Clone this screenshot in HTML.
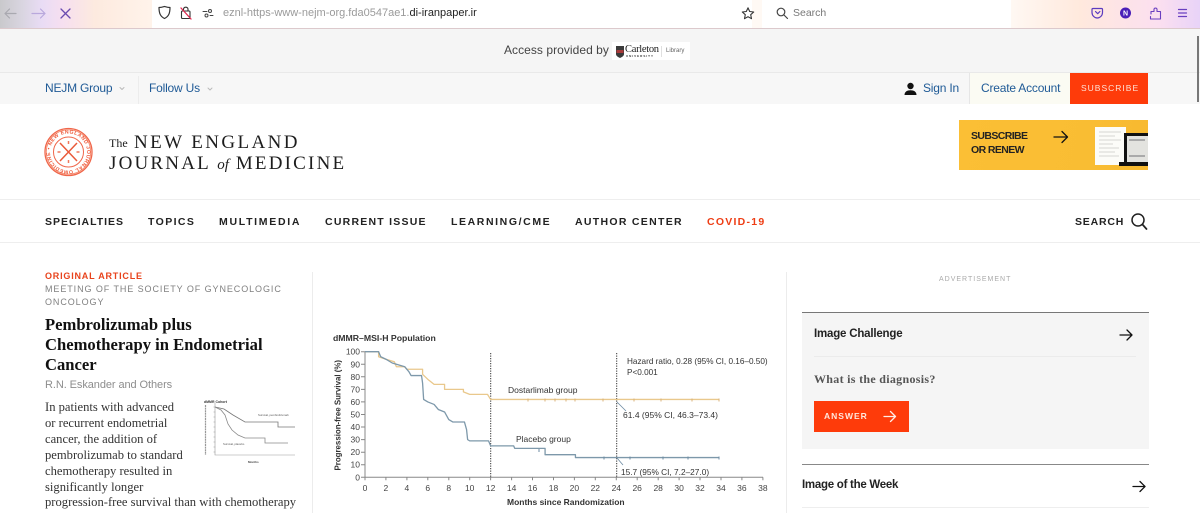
<!DOCTYPE html>
<html lang="en"><head><meta charset="utf-8"><title>NEJM</title>
<style>
html,body{margin:0;padding:0;background:#fff;width:1200px;height:513px;overflow:hidden}
body{position:relative;font-family:"Liberation Sans",sans-serif}
.a{position:absolute;white-space:nowrap}
.b{position:absolute}
.s{font-family:"Liberation Serif",serif}
.nav{top:215px;font-size:10.5px;font-weight:700;color:#222;line-height:14px}
.blue{color:#1f5a96;font-size:12px;letter-spacing:-.2px;line-height:16px}
svg{position:absolute;left:0;top:0}
</style></head><body>
<div class="b" style="left:0;top:0;width:1200px;height:28px;background:linear-gradient(90deg,#c9c9cc 0,#d9d5e0 22px,#e9dcf5 42px,#f6dff0 62px,#fdeadf 95px,#fff3ea 150px,#fffaf6 400px,#fff8f3 1011px,#ffe9dd 1080px,#fbdff0 1160px,#e8d3f8 1200px)"></div>
<div class="b" style="left:152px;top:0;width:600px;height:28px;background:#fff"></div>
<div class="b" style="left:762px;top:0;width:249px;height:28px;background:#fff"></div>
<div class="b" style="left:0;top:28px;width:1200px;height:1px;background:#dcc9cc"></div>
<div class="a" style="left:223px;top:6px;font-size:11px;line-height:15px;color:#9a9a9a">eznl-https-www-nejm-org.fda0547ae1.<span style="color:#222">di-iranpaper.ir</span></div>
<div class="a" style="left:793px;top:6px;font-size:10.5px;line-height:15px;color:#777">Search</div>

<div class="b" style="left:0;top:29px;width:1200px;height:43px;background:#f5f5f5"></div>
<div class="b" style="left:0;top:72px;width:1200px;height:1px;background:#e9e9e9"></div>
<div class="b" style="left:0;top:73px;width:1200px;height:31px;background:#f7f7f7"></div>
<div class="a" style="left:504px;top:43px;font-size:12px;line-height:15px;letter-spacing:.05px;color:#444">Access provided by</div>
<div class="b" style="left:612px;top:42px;width:78px;height:18px;background:#fff"></div>
<div class="a s" style="left:625px;top:44px;font-size:10.5px;line-height:11px;letter-spacing:-.3px;color:#222">Carleton</div>
<div class="a" style="left:626px;top:54px;font-size:3px;line-height:4px;letter-spacing:1px;font-weight:700;color:#333">UNIVERSITY</div>
<div class="a" style="left:666px;top:47px;font-size:6px;line-height:8px;color:#666">Library</div>

<div class="a blue" style="left:45px;top:80px">NEJM Group</div>
<div class="a blue" style="left:149px;top:80px">Follow Us</div>
<div class="b" style="left:138px;top:76px;width:1px;height:28px;background:#ececec"></div>
<div class="a blue" style="left:923px;top:80px">Sign In</div>
<div class="b" style="left:969px;top:73px;width:101px;height:31px;background:#fbfbf3;border-left:1px solid #e6e6e6"></div>
<div class="a blue" style="left:981px;top:80px">Create Account</div>
<div class="b" style="left:1070px;top:73px;width:78px;height:31px;background:#fe3b0a"></div>
<div class="a" style="left:1081px;top:83px;font-size:8.5px;line-height:11px;letter-spacing:1px;color:#ffe0d4">SUBSCRIBE</div>

<div class="a s" style="left:109px;top:135px;font-size:12px;line-height:16px;color:#222">The</div>
<div class="a s" style="left:134px;top:132px;font-size:19px;line-height:21px;letter-spacing:2.4px;color:#1d1d1d">NEW ENGLAND</div>
<div class="a s" style="left:109px;top:153px;font-size:19px;line-height:21px;letter-spacing:2.2px;color:#1d1d1d">JOURNAL <i style="font-size:15px;letter-spacing:0">of</i> MEDICINE</div>

<div class="b" style="left:0;top:199px;width:1200px;height:1px;background:#eeeeee"></div>
<div class="b" style="left:0;top:242px;width:1200px;height:1px;background:#eeeeee"></div>
<div class="a nav" style="left:45px;letter-spacing:1px">SPECIALTIES</div>
<div class="a nav" style="left:148px;letter-spacing:1.4px">TOPICS</div>
<div class="a nav" style="left:219px;letter-spacing:1.7px">MULTIMEDIA</div>
<div class="a nav" style="left:325px;letter-spacing:1.23px">CURRENT ISSUE</div>
<div class="a nav" style="left:451px;letter-spacing:1.6px">LEARNING/CME</div>
<div class="a nav" style="left:575px;letter-spacing:1.3px">AUTHOR CENTER</div>
<div class="a nav" style="left:707px;letter-spacing:1.25px;color:#ee3d14">COVID-19</div>
<div class="a nav" style="left:1075px;letter-spacing:.8px">SEARCH</div>

<div class="b" style="left:959px;top:120px;width:189px;height:50px;background:linear-gradient(100deg,#fbbf35,#f9bd33 70%,#f8b92f)"></div>
<div class="a" style="left:971px;top:129px;font-size:10.5px;font-weight:700;line-height:14px;letter-spacing:-.6px;color:#222">SUBSCRIBE<br>OR RENEW</div>
<div class="b" style="left:1095px;top:127px;width:31px;height:38px;background:#fcfcf8"></div>
<div class="b" style="left:1124px;top:133px;width:21px;height:28px;background:#e3e3df;border:solid #111;border-width:3px 0 0 3px"></div>
<div class="b" style="left:1119px;top:162px;width:29px;height:4px;background:#111"></div>

<div class="b" style="left:312px;top:272px;width:1px;height:241px;background:#ececec"></div>
<div class="b" style="left:786px;top:272px;width:1px;height:241px;background:#ececec"></div>

<div class="a" style="left:45px;top:271px;font-size:9px;font-weight:700;line-height:11px;letter-spacing:.8px;color:#e8431c">ORIGINAL ARTICLE</div>
<div class="a" style="left:45px;top:283px;font-size:9px;line-height:13px;letter-spacing:.92px;color:#808080">MEETING OF THE SOCIETY OF GYNECOLOGIC<br>ONCOLOGY</div>
<div class="a s" style="left:45px;top:315px;font-size:16.6px;font-weight:700;line-height:20px;color:#111">Pembrolizumab plus<br>Chemotherapy in Endometrial<br>Cancer</div>
<div class="a" style="left:45px;top:378px;font-size:11px;line-height:15px;letter-spacing:-.08px;color:#8d8d8d">R.N. Eskander and Others</div>
<div class="a s" style="left:45px;top:400px;font-size:12.6px;line-height:15.9px;color:#333">In patients with advanced<br>or recurrent endometrial<br>cancer, the addition of<br>pembrolizumab to standard<br>chemotherapy resulted in<br>significantly longer<br>progression-free survival than with chemotherapy<br>alone.</div>

<div class="a" style="left:333px;top:333px;font-size:8.7px;font-weight:700;line-height:11px;color:#333">dMMR–MSI-H Population</div>
<div class="a" style="left:508px;top:385px;font-size:8.5px;line-height:11px;color:#333">Dostarlimab group</div>
<div class="a" style="left:516px;top:434px;font-size:8.5px;line-height:11px;color:#333">Placebo group</div>
<div class="a" style="left:627px;top:357px;font-size:8.2px;line-height:10.5px;color:#333">Hazard ratio, 0.28 (95% CI, 0.16–0.50)<br>P&lt;0.001</div>
<div class="a" style="left:623px;top:410px;font-size:8.5px;line-height:11px;color:#333">61.4 (95% CI, 46.3–73.4)</div>
<div class="a" style="left:621px;top:467px;font-size:8.3px;line-height:11px;color:#333">15.7 (95% CI, 7.2–27.0)</div>
<div class="a" style="left:507px;top:497px;font-size:8.5px;font-weight:700;line-height:11px;color:#333">Months since Randomization</div>
<div class="a" style="left:283px;top:410px;width:110px;text-align:center;font-size:7.9px;font-weight:700;line-height:11px;color:#333;transform:rotate(-90deg)">Progression-free Survival (%)</div>

<div class="a" style="left:939px;top:275px;font-size:7px;line-height:10px;letter-spacing:1px;color:#aaa">ADVERTISEMENT</div>
<div class="b" style="left:802px;top:312px;width:347px;height:1px;background:#777"></div>
<div class="b" style="left:802px;top:313px;width:347px;height:136px;background:#f5f5f5"></div>
<div class="b" style="left:814px;top:356px;width:322px;height:1px;background:#ebebeb"></div>
<div class="a" style="left:814px;top:327px;font-size:11.5px;font-weight:700;line-height:15px;letter-spacing:-.2px;color:#222">Image Challenge</div>
<div class="a s" style="left:814px;top:372px;font-size:12px;font-weight:700;line-height:15px;letter-spacing:.3px;color:#555">What is the diagnosis?</div>
<div class="b" style="left:814px;top:401px;width:95px;height:31px;background:#fe3b0a"></div>
<div class="a" style="left:824px;top:411px;font-size:8.5px;font-weight:700;line-height:11px;letter-spacing:1px;color:#ffe6dc">ANSWER</div>
<div class="b" style="left:802px;top:464px;width:347px;height:1px;background:#888"></div>
<div class="a" style="left:802px;top:478px;font-size:11.5px;font-weight:700;line-height:15px;letter-spacing:-.27px;color:#222">Image of the Week</div>
<div class="b" style="left:802px;top:507px;width:347px;height:1px;background:#eeeeee"></div>
<div class="b" style="left:1197px;top:36px;width:2px;height:66px;background:#777"></div>

<svg width="1200" height="513" viewBox="0 0 1200 513" fill="none">
<!-- browser icons -->
<g stroke-linecap="round" stroke-linejoin="round">
<path d="M16 13.500H5M9.500 9 5 13.500 9.500 18" stroke="#a9a9b0" stroke-width="1.200"/>
<path d="M32 13.500H45M40.500 9l4.500 4.500-4.500 4.500" stroke="#b9a8dc" stroke-width="1.200"/>
<path d="M61 9l9 9M70 9l-9 9" stroke="#6a4bb0" stroke-width="1.300"/>
<path transform="translate(16,0)" d="M143 7.500c3 0 5-1 5.500-1s2.500 1 5.500 1c0 6-1.500 9-5.500 11-4-2-5.500-5-5.500-11z" stroke="#333" stroke-width="1.200"/>
<g transform="translate(23,0)">
<rect x="158.500" y="11" width="8.500" height="7.500" rx="1" stroke="#333" stroke-width="1.100"/>
<path d="M160.500 11V9a2.300 2.300 0 0 1 4.500 0v2" stroke="#333" stroke-width="1.100"/>
<path d="M158 8l10 11" stroke="#e22850" stroke-width="1.300"/>
</g>
<g transform="translate(26,0)">
<path d="M177 11.500h4M184 15.500h3" stroke="#444" stroke-width="1"/>
<circle cx="184" cy="11" r="1.500" stroke="#444"/><circle cx="180.500" cy="15.500" r="1.500" stroke="#444"/>
</g>
<path transform="translate(19,0)" d="M729 7.800l1.700 3.700 4 .5-3 2.700.8 4-3.500-2-3.500 2 .8-4-3-2.700 4-.5z" stroke="#333" stroke-width="1.100"/>
<circle cx="781" cy="12" r="3.800" stroke="#444" stroke-width="1.200"/>
<path d="M784 15l3.500 3.500" stroke="#444" stroke-width="1.200"/>
<path transform="translate(60,0)" d="M1033 8.500h8.500a1 1 0 0 1 1 1v3c0 3-2.500 5.500-5.250 5.500S1032 15.500 1032 12.500v-3a1 1 0 0 1 1-1z" stroke="#5b3bc0" stroke-width="1.200"/>
<path d="M1095.500 11.500l2.200 2.200 2.200-2.200" stroke="#5b3bc0" stroke-width="1.200"/>
<circle cx="1125.500" cy="13" r="5.500" fill="#4a1fb8"/>
<path transform="translate(5,0)" d="M1146 14V11.500h3V9a1.700 1.700 0 0 1 3 0v2.500h3.500V19h-10v-2.500" stroke="#6a3fc0" stroke-width="1.100"/>
<path d="M1178.500 9.500h8M1178.500 13h8M1178.500 16.500h8" stroke="#6a3fc0" stroke-width="1.200"/>
<!-- nav chevrons -->
<path d="M120 87.500l2 2 2-2" stroke="#bbb" stroke-width="1"/>
<path d="M208 88l2 2 2-2" stroke="#bbb" stroke-width="1"/>
<!-- search -->
<circle cx="1138" cy="220" r="6" stroke="#222" stroke-width="1.500"/>
<path d="M1142.500 224.500l4 4.500" stroke="#222" stroke-width="1.700"/>
<!-- arrows -->
<path d="M1054 137h13M1062 131.500l5.500 5.500-5.500 5.500" stroke="#111" stroke-width="1.300"/>
<path d="M1120 335h12M1127 330l5 5-5 5" stroke="#111" stroke-width="1.300"/>
<path d="M884 416.500h11.500M890.500 411.500l5 5-5 5" stroke="#ffeee8" stroke-width="1.300"/>
<path d="M1133 486.500h12M1140 481.500l5 5-5 5" stroke="#111" stroke-width="1.300"/>
</g>
<path d="M904.500 95c0-3.300 2.600-4.800 6-4.800s6 1.500 6 4.800z" fill="#111"/>
<circle cx="910.500" cy="86" r="3.200" fill="#111"/>
<text x="1125.500" y="15.500" font-family="Liberation Sans" font-size="7" font-weight="700" fill="#fff" text-anchor="middle">N</text>
<!-- carleton crest -->
<path d="M616 46h8v8c0 2-2 3-4 4-2-1-4-2-4-4z" fill="#3a3a3a"/><path d="M616.500 50h7v3h-7z" fill="#a83a3a"/>
<path d="M661.500 46v11" stroke="#ccc" stroke-width=".6"/>
<!-- seal -->
<defs><path id="ring" d="M68.500 170.500a18.500 18.500 0 1 1 .01 0"/></defs>
<circle cx="68.500" cy="152" r="23.500" fill="#fff" stroke="#f0664a" stroke-width="1.300"/>
<circle cx="68.500" cy="152" r="22.200" fill="none" stroke="#f48b6e" stroke-width=".8"/>
<circle cx="68.500" cy="152" r="15" fill="none" stroke="#f0664a" stroke-width="1"/>
<text font-family="Liberation Sans" font-size="5.200" font-weight="700" fill="#ef5d3e" letter-spacing=".45"><textPath href="#ring">MEDICINE • NEW ENGLAND JOURNAL OF MEDICINE</textPath></text>
<path d="M60 143l17 18M77 143l-17 18" stroke="#ea5a3a" stroke-width="1.500"/>
<path d="M68.500 141v3M68.500 160v3M57.500 152h3M76.500 152h3" stroke="#f0785c" stroke-width="1.500"/>
<!-- document -->
<g stroke="#d6d6d2" stroke-width="1">
<path d="M1099 132h22M1099 136h16M1099 140h22M1099 144h14M1099 148h20M1099 152h16M1099 156h20"/>
</g>
<path d="M1129 140h16M1129 156h16" stroke="#aaa" stroke-width="2"/>
<!-- thumbnail -->
<g stroke="#9a9a9a" stroke-width=".6">
<path d="M215 403V455H295M213.500 407h2M213.500 412h2M213.500 417h2M213.500 422h2M213.500 427h2M213.500 432h2M213.500 437h2M213.500 442h2M213.500 447h2M213.500 452h2"/>
</g>
<g stroke="#777" stroke-width=".8">
<path d="M215 407L224 409 233 415 245 422H278V427H295"/>
<path d="M215 407L221 410 225 415 228 424 232 430 238 435 245 438H265V443H288" stroke="#8a8a8a"/>
</g>
<path d="M205.500 405V455" stroke="#555" stroke-width="1.200" stroke-dasharray="2 .6" opacity=".6"/>
<text x="204" y="403" font-family="Liberation Sans" font-size="3.500" font-weight="700" fill="#333">dMMR Cohort</text>
<text x="258" y="416" font-family="Liberation Sans" font-size="2.800" fill="#555">Survival, pembrolizumab</text>
<text x="223" y="445" font-family="Liberation Sans" font-size="2.800" fill="#555">Survival, placebo</text>
<text x="248" y="463" font-family="Liberation Sans" font-size="3" font-weight="700" fill="#444">Months</text>
<!-- chart -->
<path d="M365 351.700V477.300H763" stroke="#888" stroke-width="1"/>
<path id="ticks" stroke="#888" stroke-width="1" d="M361 351.700h4M361 364.300h4M361 376.800h4M361 389.400h4M361 401.900h4M361 414.500h4M361 427h4M361 439.600h4M361 452.200h4M361 464.700h4M361 477.300h4M365 477.300v3M385.900 477.300v3M406.900 477.300v3M427.800 477.300v3M448.800 477.300v3M469.700 477.300v3M490.600 477.300v3M511.600 477.300v3M532.500 477.300v3M553.500 477.300v3M574.400 477.300v3M595.300 477.300v3M616.300 477.300v3M637.200 477.300v3M658.200 477.300v3M679.100 477.300v3M700 477.300v3M721 477.300v3M741.900 477.300v3M762.900 477.300v3"/>
<g font-family="Liberation Sans" font-size="8.500" fill="#444">
<g text-anchor="end"><text x="360" y="354.700">100</text><text x="360" y="367.300">90</text><text x="360" y="379.800">80</text><text x="360" y="392.400">70</text><text x="360" y="404.900">60</text><text x="360" y="417.500">50</text><text x="360" y="430">40</text><text x="360" y="442.600">30</text><text x="360" y="455.200">20</text><text x="360" y="467.700">10</text><text x="360" y="480.300">0</text></g>
<g text-anchor="middle"><text x="365" y="491">0</text><text x="385.900" y="491">2</text><text x="406.900" y="491">4</text><text x="427.800" y="491">6</text><text x="448.800" y="491">8</text><text x="469.700" y="491">10</text><text x="490.600" y="491">12</text><text x="511.600" y="491">14</text><text x="532.500" y="491">16</text><text x="553.500" y="491">18</text><text x="574.400" y="491">20</text><text x="595.300" y="491">22</text><text x="616.300" y="491">24</text><text x="637.200" y="491">26</text><text x="658.200" y="491">28</text><text x="679.100" y="491">30</text><text x="700" y="491">32</text><text x="721" y="491">34</text><text x="741.900" y="491">36</text><text x="762.900" y="491">38</text></g>
</g>
<path d="M490.700 353V477M616.700 353V477" stroke="#333" stroke-width="1" stroke-dasharray="1.200 1.300"/>
<g transform="translate(365,477.300) scale(10.470,-1.256)" stroke-linejoin="round">
<path vector-effect="non-scaling-stroke" stroke="#e9c88c" stroke-width="1.300" d="M0 100H1.300V96L2 94 2.800 92 3 88H3.800L4 86H5.500V82L6 78 6.600 74H7.600V70H9.400V68L10 66H11.700L12 62H33.800"/>
<path vector-effect="non-scaling-stroke" stroke="#7d98aa" stroke-width="1.300" d="M0 100H1.300L1.500 96 2 94 2.600 91 3.800 88 4.200 84 4.400 81H5.400L5.500 75 5.600 62 6 60 6.600 58 7 54 7.600 52 8 46 8.400 44H9.500L9.700 38 9.800 30 10 29H11.800L12 25H14.200L14.300 23H17.200V18H20.100V15.700H33.800"/>
</g>
<path d="M528 398.500v3M545 398.500v3M555 398.500v3M566 398.500v3M575 398.500v3M603 398.500v3M634 398.500v3M661 398.500v3M692 398.500v3M719 398.500v3" stroke="#d9b27a" stroke-width="1"/>
<path d="M604 456.500v3M630 456.500v3M663 456.500v3M688 456.500v3M719 456.500v3M539 449v3" stroke="#6d8ba3" stroke-width="1"/>
<path d="M617 402l9 9M617 458l6 7" stroke="#6d8ba3" stroke-width=".8"/>
</svg>
</body></html>
